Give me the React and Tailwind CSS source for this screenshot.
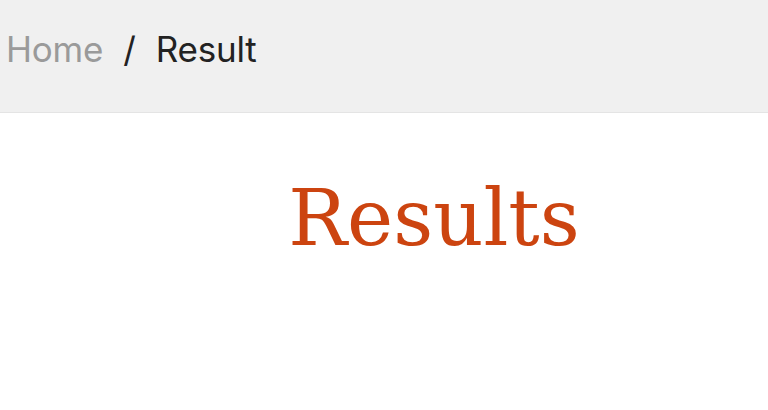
export default function App() {
  return (
    <div className="w-[768px] h-[410px] bg-white overflow-hidden">
      <div className="h-[113px] bg-[#f0f0f0] border-b border-[#e4e4e4] flex items-start pl-[6px] pt-[27px]">
        <nav className="flex items-center gap-[20px] text-[35px] leading-[44px] font-['Inter',sans-serif] tracking-[-0.2px]">
          <span className="text-[#9a9a9a]">Home</span>
          <span className="text-[#222]">/</span>
          <span className="text-[#222]">Result</span>
        </nav>
      </div>
      <div className="flex justify-center pl-[100px] pt-[66px]">
        <h1 className="text-[78px] leading-none font-['DejaVu_Serif',serif] text-[#cc4410]">Results</h1>
      </div>
    </div>
  );
}
